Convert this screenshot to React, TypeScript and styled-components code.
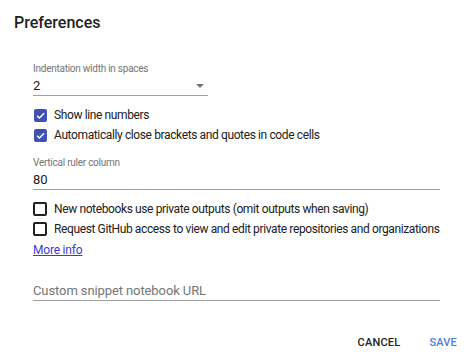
import React from "react";
import styled, { createGlobalStyle } from "styled-components";

const Global = createGlobalStyle`
  html, body { margin: 0; padding: 0; background: #ffffff; }
  body { font-family: Roboto, "Liberation Sans", Arial, sans-serif; color: #212121; }
  * { box-sizing: border-box; }
`;

const Dialog = styled.div`
  width: 474px;
  height: 358px;
  display: flex;
  flex-direction: column;
  background: #fff;
  overflow: hidden;
`;

const Title = styled.h2`
  margin: 0;
  padding: 13px 0 0 14px;
  font-size: 16px;
  line-height: 20px;
  font-weight: 500;
  color: #212121;
`;

const Content = styled.div`
  display: flex;
  flex-direction: column;
  padding: 0 34px 0 33px;
`;

const Field = styled.div<{ $width?: number; $top: number }>`
  display: flex;
  flex-direction: column;
  width: ${(p) => (p.$width ? `${p.$width}px` : "100%")};
  margin-top: ${(p) => p.$top}px;
`;

const FieldLabel = styled.div`
  font-size: 10px;
  line-height: 12px;
  letter-spacing: -0.25px;
  color: #757575;
  margin-bottom: 2px;
`;

const FieldValue = styled.div<{ $placeholder?: boolean }>`
  display: flex;
  align-items: center;
  justify-content: space-between;
  height: 19px;
  font-size: 13px;
  line-height: 18px;
  letter-spacing: ${(p) => (p.$placeholder ? "-0.1px" : "0")};
  color: ${(p) => (p.$placeholder ? "#757575" : "#212121")};
  border-bottom: 1px solid #9e9e9e;
  padding-bottom: 1px;
`;

const Arrow = styled.span`
  width: 0;
  height: 0;
  border-left: 4px solid transparent;
  border-right: 4px solid transparent;
  border-top: 4px solid #757575;
  margin-right: 4px;
`;

const Checks = styled.div<{ $top: number }>`
  display: flex;
  flex-direction: column;
  margin-top: ${(p) => p.$top}px;
`;

const CheckRow = styled.label`
  display: flex;
  align-items: center;
  height: 20px;
  gap: 7px;
  font-size: 12px;
  letter-spacing: -0.38px;
  color: #212121;
  white-space: nowrap;
`;

const Box = styled.span<{ $checked?: boolean }>`
  width: ${(p) => (p.$checked ? "13px" : "14px")};
  height: ${(p) => (p.$checked ? "13px" : "14px")};
  flex: none;
  border-radius: 2px;
  display: flex;
  align-items: center;
  justify-content: center;
  background: ${(p) => (p.$checked ? "#3f51b5" : "transparent")};
  border: ${(p) => (p.$checked ? "none" : "2px solid #212121")};
  margin-left: ${(p) => (p.$checked ? "1px" : "0")};
`;

const Link = styled.a`
  margin-top: 3px;
  font-size: 12px;
  line-height: 16px;
  letter-spacing: -0.2px;
  color: #3b3bd6;
  text-decoration: underline;
  width: max-content;
`;

const Actions = styled.div`
  display: flex;
  justify-content: flex-end;
  gap: 29px;
  margin-top: 35px;
  padding-right: 17px;
`;

const Button = styled.button<{ $primary?: boolean }>`
  border: none;
  background: none;
  padding: 0;
  font-family: inherit;
  font-size: 11px;
  font-weight: 500;
  letter-spacing: 0.2px;
  line-height: 14px;
  color: ${(p) => (p.$primary ? "#4a7fd8" : "#212121")};
`;

const Check = () => (
  <svg width="11" height="11" viewBox="0 0 24 24">
    <path d="M4.5 12.5l5 5L20 7" fill="none" stroke="#fff" strokeWidth="3.2" />
  </svg>
);

const Checkbox = ({ checked, label }: { checked?: boolean; label: string }) => (
  <CheckRow>
    <Box $checked={checked}>{checked && <Check />}</Box>
    {label}
  </CheckRow>
);

export default function App() {
  return (
    <>
      <Global />
      <Dialog>
        <Title>Preferences</Title>
        <Content>
          <Field $width={175} $top={30}>
            <FieldLabel>Indentation width in spaces</FieldLabel>
            <FieldValue>
              2
              <Arrow />
            </FieldValue>
          </Field>
          <Checks $top={9}>
            <Checkbox checked label="Show line numbers" />
            <Checkbox checked label="Automatically close brackets and quotes in code cells" />
          </Checks>
          <Field $top={12}>
            <FieldLabel>Vertical ruler column</FieldLabel>
            <FieldValue>80</FieldValue>
          </Field>
          <Checks $top={9}>
            <Checkbox label="New notebooks use private outputs (omit outputs when saving)" />
            <Checkbox label="Request GitHub access to view and edit private repositories and organizations" />
          </Checks>
          <Link href="#">More info</Link>
          <Field $top={24}>
            <FieldValue $placeholder>Custom snippet notebook URL</FieldValue>
          </Field>
        </Content>
        <Actions>
          <Button>CANCEL</Button>
          <Button $primary>SAVE</Button>
        </Actions>
      </Dialog>
    </>
  );
}
